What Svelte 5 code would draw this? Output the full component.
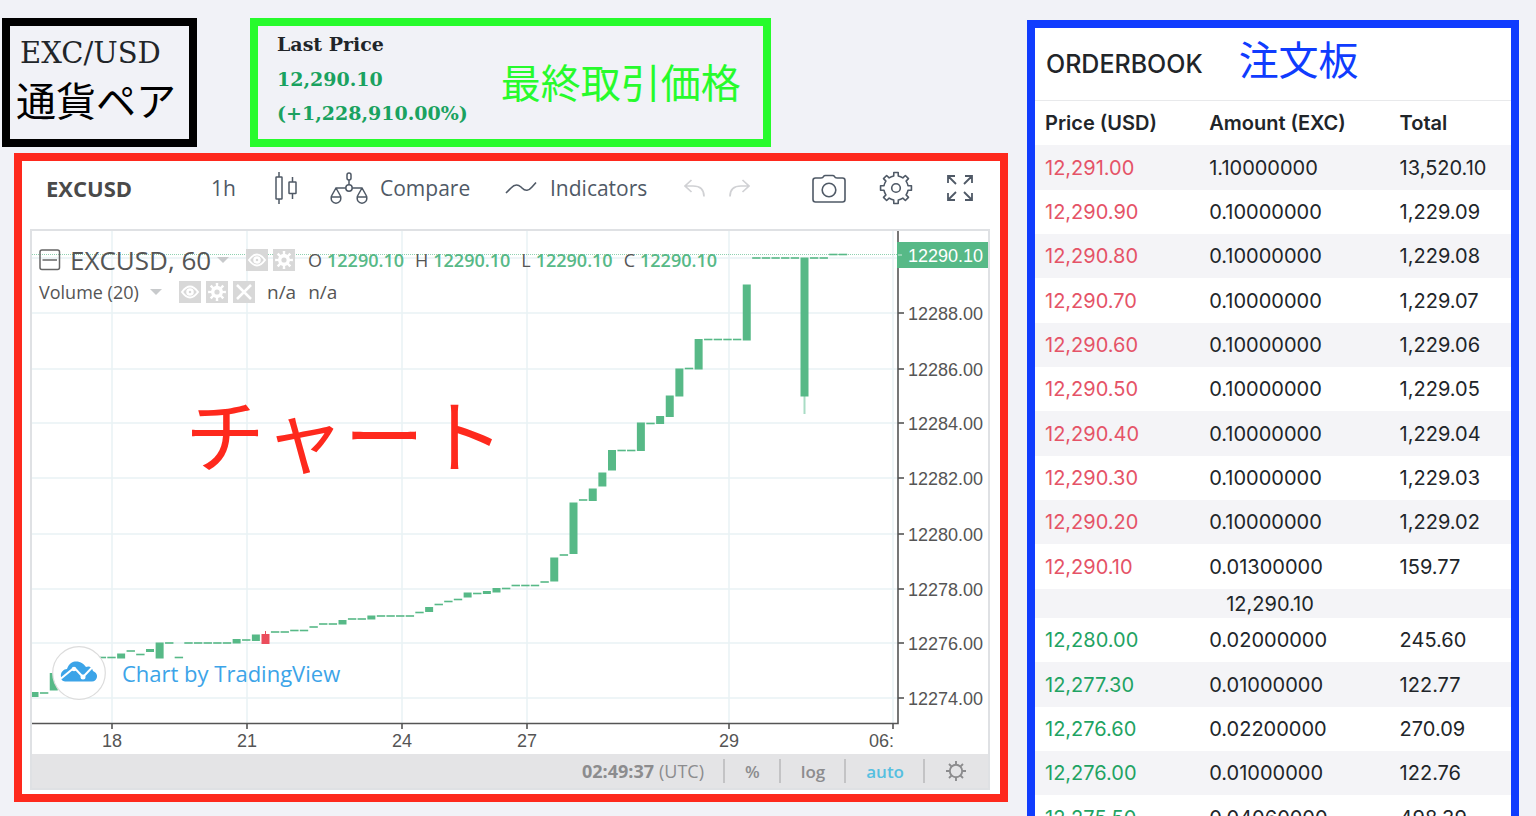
<script>
  const asks = [
    ['12,291.00', '1.10000000', '13,520.10'],
    ['12,290.90', '0.10000000', '1,229.09'],
    ['12,290.80', '0.10000000', '1,229.08'],
    ['12,290.70', '0.10000000', '1,229.07'],
    ['12,290.60', '0.10000000', '1,229.06'],
    ['12,290.50', '0.10000000', '1,229.05'],
    ['12,290.40', '0.10000000', '1,229.04'],
    ['12,290.30', '0.10000000', '1,229.03'],
    ['12,290.20', '0.10000000', '1,229.02'],
    ['12,290.10', '0.01300000', '159.77'],
  ];
  const bids = [
    ['12,280.00', '0.02000000', '245.60'],
    ['12,277.30', '0.01000000', '122.77'],
    ['12,276.60', '0.02200000', '270.09'],
    ['12,276.00', '0.01000000', '122.76'],
    ['12,275.50', '0.04060000', '498.39'],
  ];

  // Chart space: x grows by one slot per candle, y is the plot's own unit.
  const slot = 9.625;
  const firstX = 34.5;
  // [slot index, top, bottom]
  const bodies = [
    [0, 692, 697], [2, 673, 690.5], [9, 653.5, 658.5], [12, 649, 652], [13, 642.5, 658.5],
    [21, 639, 643.5], [23, 634.5, 641], [32, 620, 624.5], [35, 615.5, 619.5], [41, 607, 612],
    [45, 592.5, 597.5], [47, 591, 594], [48, 588, 592.5], [54, 557.5, 581.5], [56, 502.5, 554],
    [58, 488.5, 501], [59, 472.5, 486.5], [60, 450, 470.5], [63, 422.5, 451], [65, 416, 424],
    [66, 395.5, 417], [67, 368.5, 396.5], [69, 339, 369.5], [74, 284.5, 340.5], [80, 257.5, 396.5],
  ];
  // [first slot, last slot, y]
  const flats = [
    [1, 1, 693], [7, 8, 657.5], [10, 10, 651], [11, 11, 654.5], [14, 14, 643], [15, 15, 657.5],
    [16, 20, 643], [22, 22, 640], [25, 26, 632], [27, 28, 630.5], [29, 29, 627], [30, 31, 624],
    [33, 34, 619], [36, 39, 616], [40, 40, 612.5], [42, 42, 604.5], [43, 43, 601.5], [44, 44, 599.5],
    [46, 46, 593.5], [49, 49, 588.5], [50, 52, 585.5], [53, 53, 582], [55, 55, 555], [57, 57, 500],
    [61, 62, 450.5], [64, 64, 423.5], [68, 68, 368.5], [70, 73, 339.5], [75, 79, 258], [81, 82, 258],
    [83, 84, 254.5],
  ].flatMap(([a, b, y]) => Array.from({ length: b - a + 1 }, (_, k) => [a + k, y]));

  const prices = [
    ['12288.00', 313], ['12286.00', 369], ['12284.00', 423], ['12282.00', 478],
    ['12280.00', 534], ['12278.00', 589], ['12276.00', 643], ['12274.00', 698],
  ];
  const days = [['18', 112], ['21', 247], ['24', 402], ['27', 527], ['29', 729]];
  const ohlc = [['O', '12290.10'], ['H', '12290.10'], ['L', '12290.10'], ['C', '12290.10']];

  // Outline of a toothed wheel centred on (0, 0).
  function gear(teeth, outer, inner) {
    const step = (Math.PI * 2) / teeth;
    const at = (r, a) => `${(r * Math.sin(a)).toFixed(2)} ${(-r * Math.cos(a)).toFixed(2)}`;
    let d = '';
    for (let i = 0; i < teeth; i++) {
      const a = i * step;
      d += `${i ? 'L' : 'M'}${at(inner, a - step * 0.24)}L${at(outer, a - step * 0.18)}`;
      d += `L${at(outer, a + step * 0.18)}L${at(inner, a + step * 0.24)}`;
      d += `A${inner} ${inner} 0 0 1 ${at(inner, a + step * 0.76)}`;
    }
    return d + 'Z';
  }
</script>

{#snippet eye()}
  <button class="mini" aria-label="Hide">
    <svg viewBox="0 0 22 22" width="22" height="22" fill="none" stroke="#fff">
      <path d="M3 11Q7 5.500 11 5.500T19 11Q15 16.500 11 16.500T3 11Z" stroke-width="2" />
      <circle cx="11" cy="11" r="2.500" stroke-width="2.500" />
    </svg>
  </button>
{/snippet}

{#snippet cog()}
  <button class="mini" aria-label="Format">
    <svg viewBox="-11 -11 22 22" width="22" height="22">
      <path d={gear(8, 9, 6)} fill="#fff" />
      <circle r="2.600" fill="#d8d8d8" />
    </svg>
  </button>
{/snippet}

{#snippet row(cells, side)}
  <tr>
    <td class={side}>{cells[0]}</td>
    <td>{cells[1]}</td>
    <td>{cells[2]}</td>
  </tr>
{/snippet}

<main>
  <div class="left">
    <header>
      <section class="box pair">
        <h1>EXC/USD</h1>
        <p class="note">通貨ペア</p>
      </section>
      <section class="box last">
        <div class="figures">
          <h2>Last Price</h2>
          <p>12,290.10</p>
          <p>(+1,228,910.00%)</p>
        </div>
        <p class="note">最終取引価格</p>
      </section>
    </header>

    <section class="box chart">
      <div class="toolbar">
        <button class="symbol">EXCUSD</button>
        <button class="interval">1h</button>
        <button class="style" aria-label="Candles">
          <svg width="24" height="34" viewBox="0 0 24 34" fill="none" stroke="#4f5966" stroke-width="1.500">
            <rect x="2" y="6" width="6" height="22" rx="0.500" />
            <path d="M5 1V6M5 28V33M18.500 6V11M18.500 22V28" />
            <rect x="15" y="11" width="7" height="11.500" rx="0.500" />
          </svg>
        </button>
        <button class="compare">
          <svg width="38" height="32" viewBox="0 0 38 32" fill="none" stroke="#4f5966" stroke-width="1.500">
            <rect x="17" y="1" width="4" height="7" rx="2" />
            <circle cx="19" cy="16" r="3.200" />
            <path d="M19 8V12.800M15.800 16H6L1.500 24M22.200 16H32L36.500 24M6 16L10.500 24M32 16L27.500 24M1 25H11M27 25H37" />
            <path d="M1.500 24C-1 33.500 13 33.500 10.500 24M27.500 24C25 33.500 39 33.500 36.500 24" />
          </svg>
          <span>Compare</span>
        </button>
        <button class="indicators">
          <svg width="32" height="14" viewBox="0 0 32 14" fill="none" stroke="#4f5966" stroke-width="1.600">
            <path d="M1 12L6 7Q11 1.500 16 6L17 7Q22 12 27 6L31 1.500" />
          </svg>
          <span>Indicators</span>
        </button>
        <button class="undo" aria-label="Undo">
          <svg width="21" height="18" viewBox="0 0 21 18" fill="none" stroke="#d0d1d4" stroke-width="1.700">
            <path d="M7.500 1L1 7L7.500 13M1 7H9Q20 7 20 17.500" />
          </svg>
        </button>
        <button class="redo" aria-label="Redo">
          <svg width="21" height="18" viewBox="0 0 21 18" fill="none" stroke="#d0d1d4" stroke-width="1.700">
            <path d="M13.500 1L20 7L13.500 13M20 7H12Q1 7 1 17.500" />
          </svg>
        </button>
        <div class="tools">
          <button aria-label="Snapshot">
            <svg width="34" height="34" viewBox="0 0 34 34" fill="none" stroke="#4f5966" stroke-width="1.600">
              <path d="M3.500 7H9Q11 7 11.500 5.500Q12 4.500 13.500 4.500H20.500Q22 4.500 22.500 5.500Q23 7 25 7H30.500Q33 7 33 9.500V28.500Q33 31 30.500 31H3.500Q1 31 1 28.500V9.500Q1 7 3.500 7Z" />
              <circle cx="17" cy="19" r="6.800" />
            </svg>
          </button>
          <button aria-label="Settings">
            <svg width="34" height="34" viewBox="-17 -17 34 34" fill="none" stroke="#4f5966" stroke-width="1.600" stroke-linejoin="round">
              <path d={gear(8, 15.6, 12.2)} />
              <circle r="4.300" />
            </svg>
          </button>
          <button aria-label="Full screen">
            <svg width="28" height="28" viewBox="0 0 28 28" fill="none" stroke="#4f5966" stroke-width="1.800">
              <path d="M2 9V2H9M2 2L10 10M19 2H26V9M26 2L18 10M2 19V26H9M2 26L10 18M26 19V26H19M26 26L18 18" />
            </svg>
          </button>
        </div>
      </div>

      <div class="frame">
        <svg class="plot" viewBox="32 231 956 523" role="img" aria-label="EXCUSD 60 minute candles">
          <g stroke="#e9f2f4" stroke-width="1.500">
            <path d="M32 258H898" />
            {#each prices as [label, y] (label)}
              <path d="M32 {y}H898" />
            {/each}
            {#each days as [label, x] (label)}
              <path d="M{x} 231V723" />
            {/each}
            <path d="M893 231V723" />
          </g>
          <path d="M32 254.500H898" stroke="#8fd1b0" stroke-dasharray="1 1" />
          <path d="M804.500 396V414" stroke="#a9dcc5" stroke-width="2" />
          <g fill="#57b987">
            {#each bodies as [i, top, bottom] (i)}
              <rect x={firstX + i * slot - 4} y={top} width="8" height={bottom - top} />
            {/each}
            {#each flats as [i, y] (i)}
              <rect x={firstX + i * slot - 4.2} y={y - 0.8} width="8.400" height="1.600" />
            {/each}
          </g>
          <path d="M265.500 631V634" stroke="#eb4d5c" />
          <rect x="261.500" y="634" width="8" height="10" fill="#eb4d5c" />
          <g stroke="#555" stroke-width="1.600">
            <path d="M898 231V724M32 723.500H898.800" />
            {#each prices as [label, y] (label)}
              <path d="M898 {y}H904" />
            {/each}
            {#each days as [label, x] (label)}
              <path d="M{x} 724V729" />
            {/each}
            <path d="M893 724V729" />
          </g>
          <g class="axis">
            {#each prices as [label, y] (label)}
              <text x="908" y={y + 7}>{label}</text>
            {/each}
            {#each days as [label, x] (label)}
              <text x={x} y="747" text-anchor="middle">{label}</text>
            {/each}
            <text x="869" y="747">06:</text>
          </g>
          <rect x="897" y="242" width="92" height="26" fill="#57b987" />
          <path d="M898 255H902" stroke="#cdebdc" />
          <text class="current" x="908" y="262">12290.10</text>
        </svg>

        <div class="legend">
          <div class="series">
            <svg width="22" height="22" viewBox="0 0 22 22" fill="none" stroke="#666" stroke-width="1.500">
              <rect x="1" y="1" width="19.500" height="19.500" rx="2" />
              <path d="M3.500 11H18" />
            </svg>
            <span class="name">EXCUSD, 60</span>
            <span class="caret"></span>
            {@render eye()}
            {@render cog()}
            <dl>
              {#each ohlc as [key, value] (key)}
                <div><dt>{key}</dt><dd>{value}</dd></div>
              {/each}
            </dl>
          </div>
          <div class="volume">
            <span class="name">Volume (20)</span>
            <span class="caret"></span>
            {@render eye()}
            {@render cog()}
            <button class="mini" aria-label="Remove">
              <svg viewBox="0 0 22 22" width="22" height="22" stroke="#fff" stroke-width="2.500">
                <path d="M4 4L18 18M18 4L4 18" />
              </svg>
            </button>
            <span class="na">n/a</span>
            <span class="na">n/a</span>
          </div>
        </div>

        <p class="note chart-note">チャート</p>

        <a class="credit" href="#tradingview">
          <svg width="54" height="54" viewBox="0 0 54 54">
            <circle cx="27" cy="27" r="26.300" fill="#fff" stroke="#dcdcdc" stroke-width="1.200" />
            <path d="M9 31C8 26 12 23 15 23C17 17 21 15.500 24 15.500C29 15.500 32 18 34 21C37 19.500 40 21 41 25C46 27 46 32 43 34.500Q42 35.500 40 35.500H13Q9 35 9 31Z" fill="#3ca4e8" />
            <path d="M9 32.500L20 23.500H24L30 30H32L41 20.500" fill="none" stroke="#fff" stroke-width="2" />
            <circle cx="22" cy="23" r="2.300" fill="#fff" />
            <circle cx="31" cy="31" r="2.500" fill="#fff" />
          </svg>
          <span>Chart by TradingView</span>
        </a>

        <div class="status">
          <button class="clock"><b>02:49:37</b> (UTC)</button>
          <button class="percent">%</button>
          <button class="log">log</button>
          <button class="auto">auto</button>
          <button class="prefs" aria-label="Scale settings">
            <svg width="22" height="22" viewBox="-11 -11 22 22" fill="none" stroke="#8c8c8e" stroke-width="1.900">
              <circle r="6.200" />
              <path d="M0 -6V-10M0 6V10M-6 0H-10M6 0H10M-4.300 -4.300L-7 -7M4.300 -4.300L7 -7M-4.300 4.300L-7 7M4.300 4.300L7 7" />
            </svg>
          </button>
        </div>
      </div>
    </section>
  </div>

  <section class="box book">
    <div class="book-head">
      <h2>ORDERBOOK</h2>
      <p class="note">注文板</p>
    </div>
    <table>
      <thead>
        <tr><th>Price (USD)</th><th>Amount (EXC)</th><th>Total</th></tr>
      </thead>
      <tbody>
        {#each asks as cells (cells[0])}
          {@render row(cells, 'ask')}
        {/each}
        <tr class="mid"><td colspan="3">12,290.10</td></tr>
        {#each bids as cells (cells[0])}
          {@render row(cells, 'bid')}
        {/each}
      </tbody>
    </table>
  </section>
</main>

<style>
  :global(body) {
    margin: 0;
    background: #f1f2f7;
    overflow: hidden;
  }
  main {
    display: grid;
    grid-template-columns: minmax(0, 1006fr) minmax(0, 492fr);
    align-items: start;
    gap: 19px;
    height: 100vh;
    overflow: hidden;
    padding: 18px 17px 0 2px;
    box-sizing: border-box;
    color: #212529;
    font-family: 'Open Sans', 'Noto Sans', sans-serif;
  }
  h1, h2, p, dl, dd {
    margin: 0;
  }
  button {
    display: flex;
    align-items: center;
    padding: 0;
    border: 0;
    background: none;
    color: inherit;
    font: inherit;
    cursor: pointer;
    white-space: nowrap;
  }
  svg {
    display: block;
    flex: none;
  }
  .box {
    border: 8px solid;
    box-sizing: border-box;
  }
  .note {
    font-family: 'Noto Sans CJK JP', sans-serif;
    font-size: 40px;
    line-height: 48px;
    white-space: nowrap;
  }

  header {
    display: grid;
    grid-template-columns: minmax(0, 195fr) minmax(0, 521fr) minmax(0, 184fr);
    gap: 53px;
    height: 129px;
  }
  .pair {
    border-color: #000;
    padding: 5px 6px;
  }
  h1 {
    padding-left: 4px;
    font: 400 29px/44px 'Roboto Slab', 'DejaVu Serif', serif;
  }
  .pair .note {
    color: #000;
  }
  .last {
    display: flex;
    align-items: flex-start;
    border-color: #27fb2c;
    padding-left: 19px;
    gap: 33px;
    white-space: nowrap;
  }
  .figures {
    font: 700 19px/34px 'Roboto Slab', 'DejaVu Serif', serif;
    color: #1aa260;
  }
  .figures h2 {
    font: 700 19px/36px 'Roboto Slab', 'DejaVu Serif', serif;
    color: #212529;
  }
  .last .note {
    margin-top: 31px;
    color: #27fb2c;
  }

  .chart {
    margin: 6px 0 0 12px;
    border-color: #fe291d;
    background: #fff;
    padding: 0 10px 4px 8px;
  }
  .toolbar {
    display: flex;
    align-items: center;
    height: 68px;
    padding: 0 16px 14px 16px;
    box-sizing: border-box;
    color: #4f5966;
    font-size: 21px;
    font-weight: 500;
  }
  .symbol {
    width: 165px;
    color: #4a4a4a;
    font-size: 22px;
    font-weight: 700;
  }
  .interval {
    width: 63px;
  }
  .style {
    width: 56px;
  }
  .compare {
    width: 175px;
    gap: 12px;
  }
  .indicators {
    width: 179px;
    gap: 13px;
  }
  .undo {
    width: 45px;
  }
  .tools {
    display: flex;
    align-items: center;
    gap: 33px;
    margin-left: auto;
  }

  .frame {
    position: relative;
    border: 2px solid #dfe1e4;
  }
  .plot {
    width: 100%;
    height: auto;
  }
  .axis text,
  .current {
    font: 18px 'Liberation Sans', Arial, sans-serif;
    fill: #555;
  }
  .plot .current {
    fill: #fff;
  }
  .legend {
    position: absolute;
    top: 13px;
    left: 7px;
    color: #555;
  }
  .series,
  .volume {
    display: flex;
    align-items: center;
    height: 32px;
    gap: 5px;
    white-space: nowrap;
  }
  .series .name {
    width: 142px;
    margin-left: 4px;
    font-size: 26px;
    font-weight: 500;
  }
  .volume .name {
    width: 106px;
    font-size: 18px;
    font-weight: 500;
  }
  .caret {
    border: 6px solid transparent;
    border-top-color: #c8cacc;
    border-bottom: 0;
    margin-right: 12px;
  }
  .mini {
    background: #d8d8d8;
  }
  dl {
    display: flex;
    margin-left: 8px;
    gap: 11px;
    font-size: 18px;
    font-weight: 500;
  }
  dl div {
    display: flex;
    gap: 5px;
  }
  dd {
    color: #57b987;
    font-weight: 600;
  }
  .na {
    margin-left: 7px;
    font-size: 19px;
    font-weight: 500;
  }
  .chart-note {
    position: absolute;
    left: 16%;
    top: 152px;
    color: #fe291d;
    font-size: 80px;
    line-height: 96px;
  }
  .credit {
    position: absolute;
    left: 20px;
    bottom: 88px;
    display: flex;
    align-items: center;
    gap: 16px;
    color: #3ca4e8;
    font-size: 22px;
    text-decoration: none;
  }
  .status {
    display: flex;
    align-items: center;
    justify-content: flex-end;
    height: 34px;
    padding-right: 21px;
    background: #e4e4e6;
    color: #8c8c8e;
    font-size: 17px;
  }
  .status button {
    height: 24px;
    padding: 0 19px 0 20px;
    gap: 5px;
    border-left: 2px solid #c3c3c5;
    font-weight: 600;
  }
  .status .clock {
    border: 0;
    font-size: 18px;
    font-weight: 400;
  }
  .status .auto {
    color: #56bfe0;
  }
  .status .prefs {
    padding-right: 0;
  }

  .book {
    margin-top: 2px;
    border-color: #103cfe;
    background: #fff;
    font-family: Inter, 'Liberation Sans', sans-serif;
  }
  .book-head {
    display: flex;
    align-items: center;
    height: 72px;
    gap: 36px;
    padding-left: 11px;
    border-bottom: 1px solid #e8e9eb;
  }
  .book-head h2 {
    font-size: 25px;
    font-weight: 500;
  }
  .book-head .note {
    color: #103cfe;
    padding-bottom: 12px;
  }
  table {
    width: 100%;
    table-layout: fixed;
    border-collapse: collapse;
    font-size: 20px;
    line-height: 24px;
  }
  th, td {
    box-sizing: border-box;
    height: 44px;
    padding: 0 0 0 10px;
    text-align: left;
    white-space: nowrap;
  }
  th {
    font-weight: 600;
  }
  th:nth-child(1) {
    width: 34.5%;
  }
  th:nth-child(2) {
    width: 40%;
  }
  tbody tr:nth-child(odd) {
    background: #f4f4f7;
  }
  tbody tr:nth-child(3n + 1) td {
    height: 45px;
  }
  tbody .mid td {
    height: 29px;
    padding: 0 6px 0 0;
    text-align: center;
  }
  tbody .ask {
    color: #e55367;
  }
  tbody .bid {
    color: #1fa363;
  }
</style>
